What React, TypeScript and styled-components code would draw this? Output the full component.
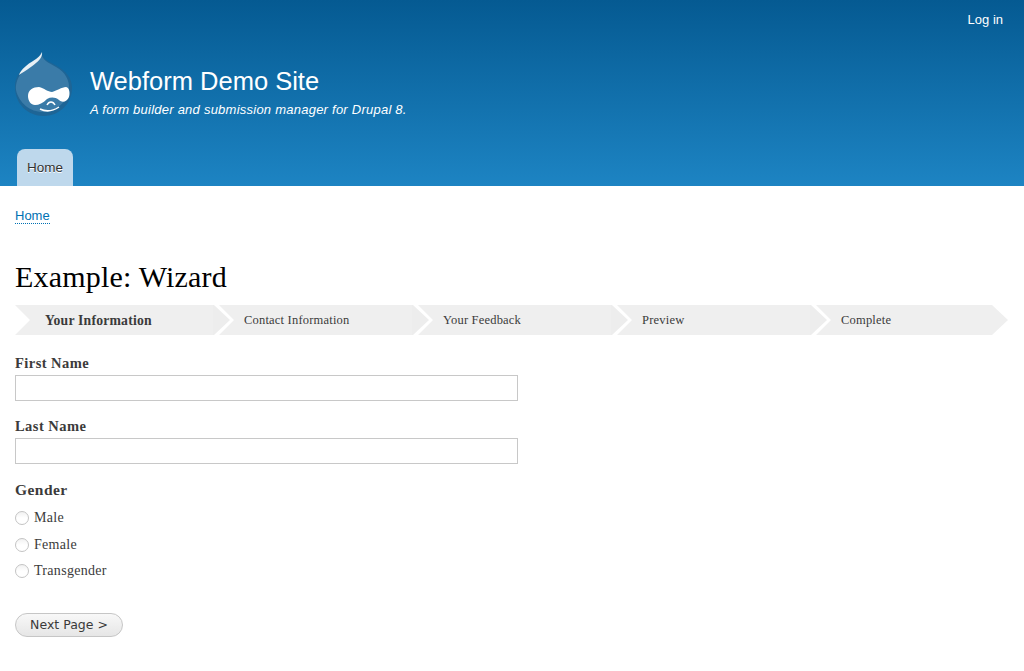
import React from 'react'
import styled, { createGlobalStyle } from 'styled-components'

const GlobalStyle = createGlobalStyle`
    html, body {
        margin: 0;
        padding: 0;
        background: #fff;
    }
    body {
        font-family: "Liberation Serif", Georgia, serif;
        color: #3b3b3b;
    }
`

const Header = styled.header`
    height: 186px;
    background: linear-gradient(to bottom, #055a92, #1d84c3);
    font-family: "Liberation Sans", Arial, sans-serif;
    color: #fff;
    display: flex;
    flex-direction: column;
`

const TopBar = styled.div`
    display: flex;
    justify-content: flex-end;
    padding: 12px 21px 0 0;
    height: 34px;
    box-sizing: border-box;
`

const LogIn = styled.a`
    font-size: 13px;
    line-height: 15px;
    color: #fff;
`

const Branding = styled.div`
    display: flex;
    align-items: flex-start;
    padding: 17px 0 0 15px;
    height: 98px;
    box-sizing: border-box;
`

const Logo = styled.svg`
    width: 58px;
    height: 66px;
    flex: none;
`

const SiteText = styled.div`
    margin-left: 17px;
    padding-top: 15px;
`

const SiteName = styled.div`
    font-size: 25.5px;
    line-height: 30px;
`

const Slogan = styled.div`
    font-size: 13px;
    line-height: 16px;
    font-style: italic;
    margin-top: 6px;
    letter-spacing: 0.24px;
`

const Nav = styled.nav`
    margin-top: auto;
    padding-left: 17px;
    display: flex;
`

const Tab = styled.a`
    width: 56px;
    height: 37px;
    box-sizing: border-box;
    background: #bed8ec;
    border-radius: 8px 8px 0 0;
    padding-left: 10px;
    font-size: 13.5px;
    line-height: 37px;
    color: #333;
    text-shadow: 0 1px 0 #fff;
`

const Main = styled.main`
    padding: 0 15px;
`

const Breadcrumb = styled.div`
    padding-top: 22px;
    height: 58px;
    box-sizing: border-box;
    font-family: "Liberation Sans", Arial, sans-serif;
    font-size: 13px;
    line-height: 15px;
`

const CrumbLink = styled.a`
    color: #0071b3;
    border-bottom: 1px dotted #0071b3;
`

const Title = styled.h1`
    margin: 0;
    height: 61px;
    padding-top: 16px;
    box-sizing: border-box;
    font-size: 30px;
    line-height: 34px;
    font-weight: normal;
    color: #000;
    letter-spacing: 0.2px;
`

const Steps = styled.ol`
    display: flex;
    list-style: none;
    margin: 0;
    padding: 0;
`

const Step = styled.li<{ $width: number; $indent: number; $current?: boolean }>`
    width: ${p => p.$width}px;
    height: 30px;
    flex: none;
    box-sizing: border-box;
    margin-right: -11px;
    padding-left: ${p => p.$indent}px;
    background: #efefef;
    clip-path: polygon(0 0, calc(100% - 16px) 0, 100% 50%, calc(100% - 16px) 100%, 0 100%, 15px 50%);
    font-size: ${p => (p.$current ? '13.7px' : '12.5px')};
    line-height: ${p => (p.$current ? '31px' : '30px')};
    letter-spacing: 0.2px;
    font-weight: ${p => (p.$current ? 'bold' : 'normal')};

    &:not(:last-child) {
        background: linear-gradient(to right, #efefef calc(100% - 17px), #ededed calc(100% - 17px));
    }
`

const Form = styled.form`
    padding-top: 20px;
`

const Field = styled.div`
    margin-bottom: 17px;
`

const Label = styled.label`
    display: block;
    font-size: 14.5px;
    line-height: 17px;
    font-weight: bold;
    letter-spacing: 0.45px;
    margin-bottom: 3px;
`

const Legend = styled.div`
    font-size: 15.5px;
    line-height: 17px;
    font-weight: bold;
    letter-spacing: 0.45px;
    margin: 3px 0 7px;
`

const TextInput = styled.input`
    display: block;
    width: 503px;
    height: 26px;
    margin: 0;
    box-sizing: border-box;
    border: 1px solid #c8c8c8;
    background: #fff;
    outline: none;
`

const RadioRow = styled.label`
    display: flex;
    align-items: center;
    height: 26.5px;
    font-size: 14px;
    letter-spacing: 0.3px;
`

const Radio = styled.input`
    appearance: none;
    width: 14px;
    height: 14px;
    margin: 0 5px 0 0;
    border: 1px solid #c4c4c4;
    border-radius: 50%;
    background: linear-gradient(to bottom, #f1f1f1, #fff 50%);
`

const NextButton = styled.button`
    display: block;
    margin-top: 28px;
    width: 108px;
    height: 24px;
    padding: 0;
    border: 1px solid #c6c6c6;
    border-radius: 12px;
    background: linear-gradient(to bottom, #f8f8f8, #e6e6e6);
    font-family: "DejaVu Sans", Verdana, sans-serif;
    font-size: 12.5px;
    color: #3a3a3a;
`

const steps = [
    { label: 'Your Information', width: 215, indent: 30, current: true },
    { label: 'Contact Information', width: 210, indent: 25 },
    { label: 'Your Feedback', width: 210, indent: 25 },
    { label: 'Preview', width: 210, indent: 25 },
    { label: 'Complete', width: 192, indent: 25 },
]

const DrupalLogo = () => (
    <Logo viewBox="15 51 58 66">
        <path d="M41 52 C42 59 50 62 57 66 C66 71 72 78 72 88 C72 104 59 116 43.5 116 C28 116 15 104 15 87 C15 72 26 67 33 62 C37 59 40 56 41 52 Z" fill="#1e6596" />
        <path d="M41 53 C42 60 49 63 56 67 C65 72 70 80 69 90 C67 103 55 112 43 112 C30 112 19 103 16 90 C15 76 26 68 33 63 C37 60 40 57 41 53 Z" fill="#3a7ba8" />
        <path d="M42 52 C43 59 36 64 19 75 C21 69 28 64 33 61 C38 58 41 55 42 52 Z" fill="#e8f0f5" />
        <path d="M28 96 C28 90 33 87 39 87 C44 88 48 92 52 92 C56 91 62 87 66 87 C70 88 70 94 69 97 C67 102 62 103 59 100 C55 97 51 97 47 99 C43 103 39 105 35 105 C31 105 28 101 28 96 Z" fill="#fff" />
        <path d="M40 109 C46 112 53 111 59 107" stroke="#fff" strokeWidth="1.5" fill="none" />
        <path d="M47 105 C49 101 53 101 55 105" stroke="#fff" strokeWidth="1.5" fill="none" />
    </Logo>
)

export default function App() {
    return (
        <>
            <GlobalStyle />
            <Header>
                <TopBar>
                    <LogIn>Log in</LogIn>
                </TopBar>
                <Branding>
                    <DrupalLogo />
                    <SiteText>
                        <SiteName>Webform Demo Site</SiteName>
                        <Slogan>A form builder and submission manager for Drupal 8.</Slogan>
                    </SiteText>
                </Branding>
                <Nav>
                    <Tab>Home</Tab>
                </Nav>
            </Header>
            <Main>
                <Breadcrumb>
                    <CrumbLink>Home</CrumbLink>
                </Breadcrumb>
                <Title>Example: Wizard</Title>
                <Steps>
                    {steps.map(s => (
                        <Step key={s.label} $width={s.width} $indent={s.indent} $current={s.current}>
                            {s.label}
                        </Step>
                    ))}
                </Steps>
                <Form>
                    <Field>
                        <Label>First Name</Label>
                        <TextInput type="text" />
                    </Field>
                    <Field>
                        <Label>Last Name</Label>
                        <TextInput type="text" />
                    </Field>
                    <Legend>Gender</Legend>
                    {['Male', 'Female', 'Transgender'].map(g => (
                        <RadioRow key={g}>
                            <Radio type="radio" name="gender" />
                            {g}
                        </RadioRow>
                    ))}
                    <NextButton type="button">Next Page &gt;</NextButton>
                </Form>
            </Main>
        </>
    )
}
